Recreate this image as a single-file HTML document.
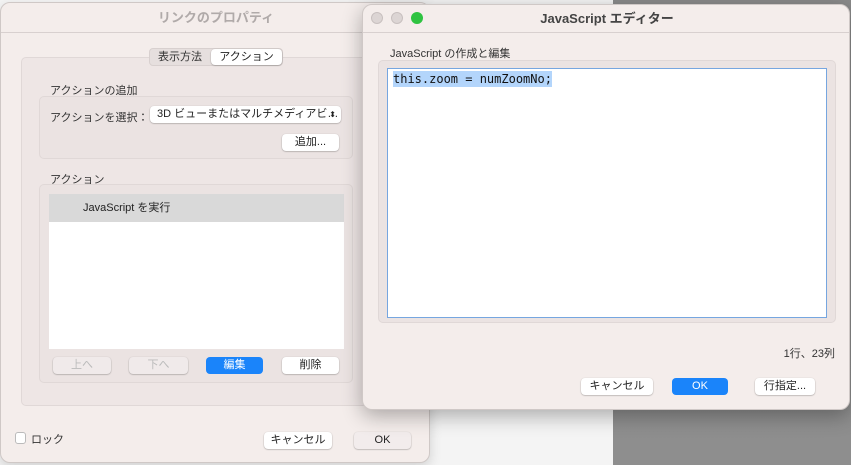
<!DOCTYPE html>
<html><head><meta charset="utf-8"><style>
*{box-sizing:border-box;margin:0;padding:0}
body{width:851px;height:465px;position:relative;overflow:hidden;background:#f4f4f4;font-family:"Liberation Sans","Noto Sans CJK JP",sans-serif;font-size:11px;color:#333}
.abs{position:absolute}
.win{position:absolute;background:#f4edeb;border-radius:10px;border:1px solid #cfc8c6;overflow:hidden}
.btn{position:absolute;height:17px;background:#fff;border-radius:4px;box-shadow:0 0.5px 1.5px rgba(0,0,0,.35);text-align:center;line-height:17px;font-size:11px;color:#222}
.blue{background:#1a84fa;color:#fff;box-shadow:none}
.dis{background:#f0eaea;color:#bbb}
.grp{position:absolute;background:#ebe3e2;border:1px solid #e0d8d7;border-radius:5px}
</style></head><body>
<div class="abs" style="left:613px;top:0;width:238px;height:465px;background:linear-gradient(#8a8a8a,#8e8e8e)"></div>

<div class="win" style="left:0;top:2px;width:430px;height:461px;box-shadow:0 4px 12px rgba(0,0,0,.15)">
 <div class="abs" style="left:0;top:0;width:430px;height:30px;border-bottom:1px solid #d8d0cf;text-align:center;line-height:30px;font-size:13px;font-weight:bold;color:#b0aaa9">リンクのプロパティ</div>
 <div class="grp" style="left:20px;top:54px;width:352px;height:349px;background:#eee6e5"></div>
 <div class="abs" style="left:148px;top:45px;width:134px;height:18px;background:#e6dfde;border-radius:4px;border:1px solid #d8d0cf"></div>
 <div class="abs" style="left:149px;top:46px;width:60px;height:16px;line-height:16px;text-align:center;color:#333">表示方法</div>
 <div class="btn" style="left:210px;top:46px;width:71px;height:16px;line-height:16px">アクション</div>
 <div class="abs" style="left:49px;top:79px">アクションの追加</div>
 <div class="grp" style="left:38px;top:93px;width:314px;height:63px"></div>
 <div class="abs" style="left:49px;top:106px">アクションを選択：</div>
 <div class="btn" style="left:149px;top:103px;width:191px;height:17px;text-align:left;padding-left:7px">3D ビューまたはマルチメディアビ…<span style="position:absolute;right:5px;top:0;font-size:8px">⬍</span></div>
 <div class="btn" style="left:281px;top:131px;width:57px">追加...</div>
 <div class="abs" style="left:49px;top:168px">アクション</div>
 <div class="grp" style="left:38px;top:181px;width:314px;height:199px"></div>
 <div class="abs" style="left:48px;top:191px;width:295px;height:155px;background:#fff"></div>
 <div class="abs" style="left:48px;top:191px;width:295px;height:28px;background:#d9d9d9;line-height:28px;padding-left:34px;color:#222">JavaScript を実行</div>
 <div class="btn dis" style="left:52px;top:354px;width:58px">上へ</div>
 <div class="btn dis" style="left:128px;top:354px;width:59px">下へ</div>
 <div class="btn blue" style="left:205px;top:354px;width:57px">編集</div>
 <div class="btn" style="left:281px;top:354px;width:57px">削除</div>
 <div class="abs" style="left:14px;top:429px;width:11px;height:12px;background:#fff;border:1px solid #bbb;border-radius:3px"></div>
 <div class="abs" style="left:30px;top:428px">ロック</div>
 <div class="btn" style="left:263px;top:429px;width:68px">キャンセル</div>
 <div class="btn" style="left:353px;top:429px;width:57px;background:#f2ecec">OK</div>
</div>

<div class="win" style="left:362px;top:4px;width:488px;height:406px;box-shadow:0 6px 20px rgba(0,0,0,.3)">
 <div class="abs" style="left:0;top:0;width:488px;height:28px;border-bottom:1px solid #d8d0cf;text-align:center;line-height:28px;font-size:13px;font-weight:bold;color:#444">JavaScript エディター</div>
 <div class="abs" style="left:8px;top:7px;width:12px;height:12px;border-radius:50%;background:#dcd5d4;border:1px solid #c8c0bf"></div>
 <div class="abs" style="left:28px;top:7px;width:12px;height:12px;border-radius:50%;background:#dcd5d4;border:1px solid #c8c0bf"></div>
 <div class="abs" style="left:48px;top:7px;width:12px;height:12px;border-radius:50%;background:#2fc341"></div>
 <div class="abs" style="left:27px;top:40px">JavaScript の作成と編集</div>
 <div class="grp" style="left:15px;top:55px;width:458px;height:263px"></div>
 <div class="abs" style="left:24px;top:63px;width:440px;height:250px;background:#fff;border:1px solid #76a6e0"></div>
 <div class="abs" style="left:30px;top:66px;height:16px;background:#b3d5fb;font-family:'DejaVu Sans Mono','Liberation Mono',monospace;font-size:12px;line-height:16px;color:#111">this.zoom = numZoomNo;</div>
 <div class="abs" style="right:14px;top:340px;color:#333">1行、23列</div>
 <div class="btn" style="left:218px;top:373px;width:72px">キャンセル</div>
 <div class="btn blue" style="left:309px;top:373px;width:56px">OK</div>
 <div class="btn" style="left:392px;top:373px;width:60px">行指定...</div>
</div>
</body></html>
